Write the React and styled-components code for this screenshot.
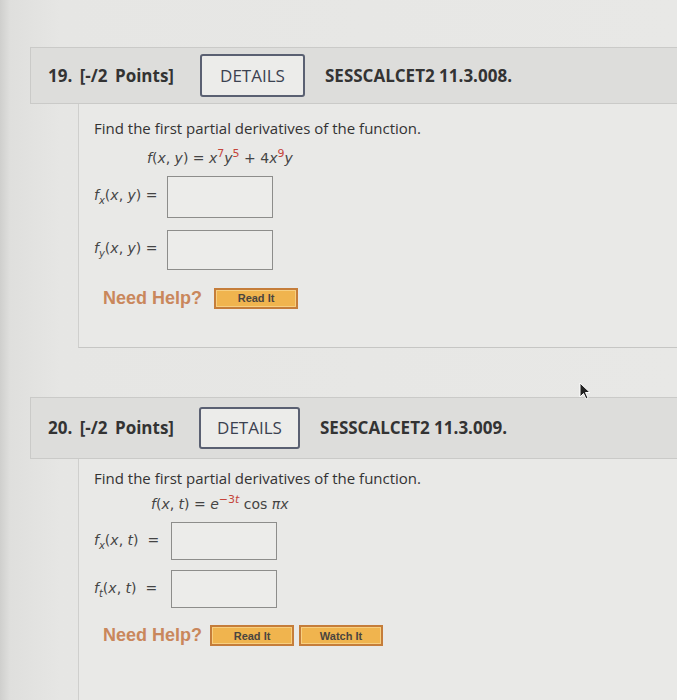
import React from "react";
import styled, { createGlobalStyle } from "styled-components";

const Global = createGlobalStyle`
  html, body {
    margin: 0;
    padding: 0;
    background: #e3e3e1;
  }
  body {
    font-family: "Open Sans", "Liberation Sans", sans-serif;
    color: #333;
  }
`;

const Page = styled.div`
  width: 677px;
  height: 700px;
  overflow: hidden;
  position: relative;
  background: linear-gradient(90deg, #cfcfcd 0px, #dfdfdd 10px, #e6e6e4 60px, #e8e8e6 100%);
  padding-top: 47px;
  box-sizing: border-box;
`;

const Question = styled.section`
  margin-left: ${(p) => p.$left}px;
  margin-bottom: ${(p) => p.$gap || 0}px;
`;

const Header = styled.div`
  display: flex;
  align-items: center;
  height: ${(p) => p.$h}px;
  padding-left: 17px;
  background: #dddddb;
  border: 1px solid #cacac8;
  border-right: none;
`;

const Num = styled.span`
  font-weight: 700;
  font-size: 17px;
  color: #333;
  width: 152px;
  word-spacing: 3px;
`;

const Details = styled.button`
  font-family: "Open Sans", "Liberation Sans", sans-serif;
  font-size: 17px;
  color: #3b4150;
  background: #ececea;
  border: 2px solid #5a6072;
  border-radius: 3px;
  height: ${(p) => p.$h}px;
  width: ${(p) => p.$w}px;
  padding: 0;
  margin-left: ${(p) => p.$ml}px;
  margin-right: 20px;
`;

const Code = styled.span`
  font-weight: 700;
  font-size: 17px;
  color: #333;
`;

const Body = styled.div`
  margin-left: 48px;
  border-left: 1px solid #cfcfcd;
  border-bottom: ${(p) => (p.$bottom ? "1px solid #c6c6c4" : "none")};
  padding: ${(p) => p.$pt}px 0 ${(p) => p.$pb}px 15px;
  background: #e9e9e7;
`;

const Prompt = styled.p`
  margin: 0;
  font-size: 15px;
  color: #333;
`;

const Formula = styled.div`
  font-family: "DejaVu Sans", "Liberation Sans", sans-serif;
  font-size: 14px;
  color: #444;
  margin: ${(p) => p.$mt}px 0 0 ${(p) => p.$ml}px;
`;

const I = styled.i``;

const Red = styled.sup`
  color: #c5443a;
  font-size: 11px;
  font-style: normal;
`;

const AnswerRow = styled.div`
  display: flex;
  align-items: center;
  margin-top: ${(p) => p.$mt}px;
`;

const Label = styled.span`
  font-family: "DejaVu Sans", "Liberation Sans", sans-serif;
  font-size: 14px;
  color: #444;
  width: ${(p) => p.$w}px;
`;

const Sub = styled.sub`
  font-size: 10px;
`;

const Box = styled.div`
  width: 104px;
  height: ${(p) => p.$h}px;
  border: 1px solid #8d8d8b;
  background: #ececea;
`;

const HelpRow = styled.div`
  display: flex;
  align-items: center;
  margin-top: ${(p) => p.$mt}px;
  padding-left: 9px;
`;

const Help = styled.span`
  font-family: "Liberation Sans", Arial, sans-serif;
  font-weight: 700;
  font-size: 18px;
  color: #c9875c;
  margin-right: ${(p) => p.$mr}px;
`;

const HelpButton = styled.button`
  font-family: "Liberation Sans", Arial, sans-serif;
  font-weight: 700;
  font-size: 11px;
  color: #4a4540;
  background: #f0b44e;
  border: 2px solid #c57d3a;
  box-shadow: inset 0 0 0 1px #f7cf80;
  width: 84px;
  height: 21px;
  padding: 0;
  margin-right: 5px;
`;

const Cursor = styled.svg`
  position: absolute;
  left: 578px;
  top: 382px;
`;

export default function App() {
  return (
    <Page>
      <Global />
      <Question $left={30} $gap={49}>
        <Header $h={55}>
          <Num>19. [-/2 Points]</Num>
          <Details $h={43} $w={105} $ml={0}>DETAILS</Details>
          <Code>SESSCALCET2 11.3.008.</Code>
        </Header>
        <Body $bottom $pt={14} $pb={38}>
          <Prompt>Find the first partial derivatives of the function.</Prompt>
          <Formula $ml={53} $mt={9}>
            <I>f</I>(<I>x</I>, <I>y</I>) = <I>x</I>
            <Red>7</Red>
            <I>y</I>
            <Red>5</Red> + 4<I>x</I>
            <Red>9</Red>
            <I>y</I>
          </Formula>
          <AnswerRow $mt={10}>
            <Label $w={73}>
              <I>f</I>
              <Sub>
                <I>x</I>
              </Sub>
              (<I>x</I>, <I>y</I>) =
            </Label>
            <Box $h={40} />
          </AnswerRow>
          <AnswerRow $mt={12}>
            <Label $w={73}>
              <I>f</I>
              <Sub>
                <I>y</I>
              </Sub>
              (<I>x</I>, <I>y</I>) =
            </Label>
            <Box $h={38} />
          </AnswerRow>
          <HelpRow $mt={18}>
            <Help $mr={12}>Need Help?</Help>
            <HelpButton>Read It</HelpButton>
          </HelpRow>
        </Body>
      </Question>

      <Question $left={30}>
        <Header $h={60}>
          <Num>20. [-/2 Points]</Num>
          <Details $h={42} $w={101} $ml={-1}>DETAILS</Details>
          <Code>SESSCALCET2 11.3.009.</Code>
        </Header>
        <Body $pt={9} $pb={60}>
          <Prompt>Find the first partial derivatives of the function.</Prompt>
          <Formula $ml={57} $mt={5}>
            <I>f</I>(<I>x</I>, <I>t</I>) = <I>e</I>
            <Red>−3<I>t</I></Red> cos <I>πx</I>
          </Formula>
          <AnswerRow $mt={11}>
            <Label $w={77}>
              <I>f</I>
              <Sub>
                <I>x</I>
              </Sub>
              (<I>x</I>, <I>t</I>) &nbsp;=
            </Label>
            <Box $h={36} />
          </AnswerRow>
          <AnswerRow $mt={10}>
            <Label $w={77}>
              <I>f</I>
              <Sub>
                <I>t</I>
              </Sub>
              (<I>x</I>, <I>t</I>) &nbsp;=
            </Label>
            <Box $h={36} />
          </AnswerRow>
          <HelpRow $mt={17}>
            <Help $mr={8}>Need Help?</Help>
            <HelpButton>Read It</HelpButton>
            <HelpButton>Watch It</HelpButton>
          </HelpRow>
        </Body>
      </Question>

      <Cursor width="14" height="18" viewBox="0 0 14 18">
        <path d="M2 1 L2 15 L5.5 11.5 L8 17 L10 16 L7.5 10.5 L12 10.5 Z" fill="#222" stroke="#fff" strokeWidth="1" />
      </Cursor>
    </Page>
  );
}
